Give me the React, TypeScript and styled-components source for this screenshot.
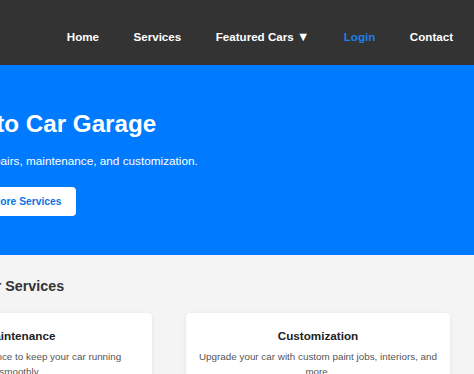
import React from "react";
import styled, { createGlobalStyle } from "styled-components";

const GlobalStyle = createGlobalStyle`
  html, body {
    margin: 0;
    padding: 0;
    overflow: hidden;
    background: #f4f4f4;
  }
  body {
    font-family: "Liberation Sans", Arial, sans-serif;
  }
  * { box-sizing: border-box; }
`;

const Page = styled.div`
  width: 908px;
  margin-left: -434px;
`;

const Nav = styled.header`
  height: 65px;
  background: #333;
  display: flex;
  align-items: center;
  justify-content: space-between;
  padding: 8px 21px 0 24px;
`;

const Logo = styled.div`
  color: #fff;
  font-size: 17px;
  font-weight: 700;
`;

const NavList = styled.nav`
  display: flex;
  gap: 34.5px;
`;

const NavLink = styled.a<{ $active?: boolean }>`
  color: ${(p) => (p.$active ? "#1f7de9" : "#fff")};
  font-size: 11.6px;
  font-weight: 700;
  line-height: 14px;
  text-decoration: none;
`;

const Caret = styled.span`
  font-size: 12.5px;
`;

const Hero = styled.section`
  background: #007bff;
  color: #fff;
  text-align: center;
  padding: 45px 20px 39px;
  display: flex;
  flex-direction: column;
  align-items: center;
`;

const Title = styled.h1`
  margin: 0 0 16px;
  font-size: 24.2px;
  line-height: 28px;
  font-weight: 700;
`;

const Subtitle = styled.p`
  margin: 0 0 19px;
  font-size: 11.75px;
  line-height: 14px;
`;

const HeroButton = styled.a`
  display: inline-flex;
  align-items: center;
  height: 29px;
  padding: 0 14px;
  background: #fff;
  color: #0a74e6;
  border-radius: 4px;
  font-size: 10.3px;
  font-weight: 700;
  text-decoration: none;
`;

const Services = styled.section`
  background: #f4f4f4;
  padding: 23px 24px 40px;
`;

const SectionTitle = styled.h2`
  margin: 0 0 18px;
  text-align: center;
  color: #333;
  font-size: 14.3px;
  line-height: 17px;
  font-weight: 700;
`;

const CardGrid = styled.div`
  display: grid;
  grid-template-columns: repeat(3, 264px);
  gap: 34px;
  justify-content: center;
`;

const Card = styled.article`
  background: #fff;
  border-radius: 4px;
  box-shadow: 0 1px 4px rgba(0, 0, 0, 0.08);
  padding: 16px 10px 16px;
  text-align: center;
`;

const CardTitle = styled.h3`
  margin: 0 0 6px;
  color: #222;
  font-size: 11.7px;
  line-height: 14px;
  font-weight: 700;
`;

const CardText = styled.p`
  margin: 0;
  color: #555;
  font-size: 9.85px;
  line-height: 15px;
`;

const services = [
  { title: "Car Repair", text: "Expert repairs for all car makes and models." },
  { title: "Maintenance", text: "Regular maintenance to keep your car running smoothly." },
  { title: "Customization", text: "Upgrade your car with custom paint jobs, interiors, and more." },
];

export default function App() {
  return (
    <>
      <GlobalStyle />
      <Page>
        <Nav>
          <Logo>Car Garage</Logo>
          <NavList>
            <NavLink href="#">Home</NavLink>
            <NavLink href="#">Services</NavLink>
            <NavLink href="#">
              Featured Cars <Caret>▼</Caret>
            </NavLink>
            <NavLink href="#" $active>Login</NavLink>
            <NavLink href="#">Contact</NavLink>
          </NavList>
        </Nav>
        <Hero>
          <Title>Welcome to Car Garage</Title>
          <Subtitle>Your one-stop shop for car repairs, maintenance, and customization.</Subtitle>
          <HeroButton href="#">Explore Services</HeroButton>
        </Hero>
        <Services>
          <SectionTitle>Our Services</SectionTitle>
          <CardGrid>
            {services.map((s) => (
              <Card key={s.title}>
                <CardTitle>{s.title}</CardTitle>
                <CardText>{s.text}</CardText>
              </Card>
            ))}
          </CardGrid>
        </Services>
      </Page>
    </>
  );
}
